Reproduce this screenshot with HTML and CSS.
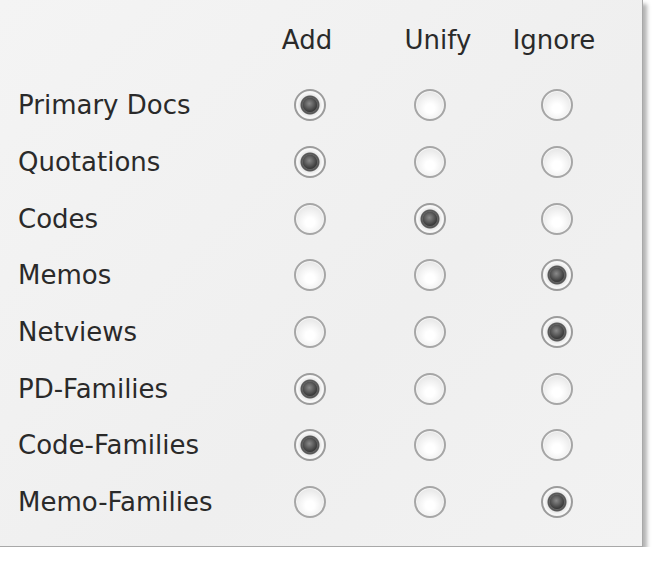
FILE: index.html
```html
<!DOCTYPE html>
<html>
	<head>
		<title>Merge Options</title>
		<link rel="stylesheet" href="styles.css">
	</head>
	<body>
		<main id="panel">
			<form id="merge">
				<span></span>
				<span class="head">Add</span>
				<span class="head unify">Unify</span>
				<span class="head">Ignore</span>

				<label>Primary Docs</label>
				<input type="radio" name="pd" checked />
				<input type="radio" name="pd" />
				<input type="radio" name="pd" />

				<label>Quotations</label>
				<input type="radio" name="quot" checked />
				<input type="radio" name="quot" />
				<input type="radio" name="quot" />

				<label>Codes</label>
				<input type="radio" name="codes" />
				<input type="radio" name="codes" checked />
				<input type="radio" name="codes" />

				<label>Memos</label>
				<input type="radio" name="memos" />
				<input type="radio" name="memos" />
				<input type="radio" name="memos" checked />

				<label>Netviews</label>
				<input type="radio" name="net" />
				<input type="radio" name="net" />
				<input type="radio" name="net" checked />

				<label>PD-Families</label>
				<input type="radio" name="pdfam" checked />
				<input type="radio" name="pdfam" />
				<input type="radio" name="pdfam" />

				<label>Code-Families</label>
				<input type="radio" name="codefam" checked />
				<input type="radio" name="codefam" />
				<input type="radio" name="codefam" />

				<label>Memo-Families</label>
				<input type="radio" name="memofam" />
				<input type="radio" name="memofam" />
				<input type="radio" name="memofam" checked />
			</form>
		</main>
	</body>
</html>
```

FILE: styles.css
```css
html,
body {
	margin: 0;
	background-color: white;
}
#panel {
	width: 642px;
	height: 546px;
	background: linear-gradient(135deg, #f4f4f4, #efefef 60%, #f2f2f2);
	border-right: 1px solid #a8a8a8;
	border-bottom: 1px solid #a8a8a8;
	box-shadow: 4px 4px 4px rgba(0, 0, 0, 0.3);
	font-family: "DejaVu Sans", Verdana, sans-serif;
	font-size: 26px;
	color: #2a2a2a;
}
#merge {
	display: grid;
	grid-template-columns: 242px 100px 140px 114px;
	grid-template-rows: 77px;
	grid-auto-rows: 56.7px;
	align-items: center;
	padding-left: 18px;
}
.head {
	text-align: center;
	padding-top: 3px;
	padding-right: 6px;
}
.unify {
	padding-left: 16px;
	padding-right: 0;
}
label {
	white-space: nowrap;
}
input[type="radio"] {
	appearance: none;
	-webkit-appearance: none;
	margin: 0;
	justify-self: center;
	position: relative;
	width: 32px;
	height: 32px;
	border-radius: 50%;
	border: 2px solid #a6a6a6;
	box-sizing: border-box;
	background: radial-gradient(circle at 50% 62%, #ffffff 20%, #e0e0e0 90%);
	box-shadow: inset 0 0 0 1px #f6f6f6;
}
input[type="radio"]:checked {
	border-color: #9c9c9c;
	background: radial-gradient(circle, #3c3c3c 0, #4a4a4a 6px, #5a5a5a 9px, #e8e8e8 10px, #fafafa 13px);
}
input[type="radio"]:checked::after {
	content: "";
	position: absolute;
	left: 7px;
	top: 7px;
	width: 14px;
	height: 14px;
	border-radius: 50%;
	background: radial-gradient(circle at 45% 40%, #8a8a8a, #3a3a3a 70%);
	box-shadow: 0 0 0 1px #666;
}
```
